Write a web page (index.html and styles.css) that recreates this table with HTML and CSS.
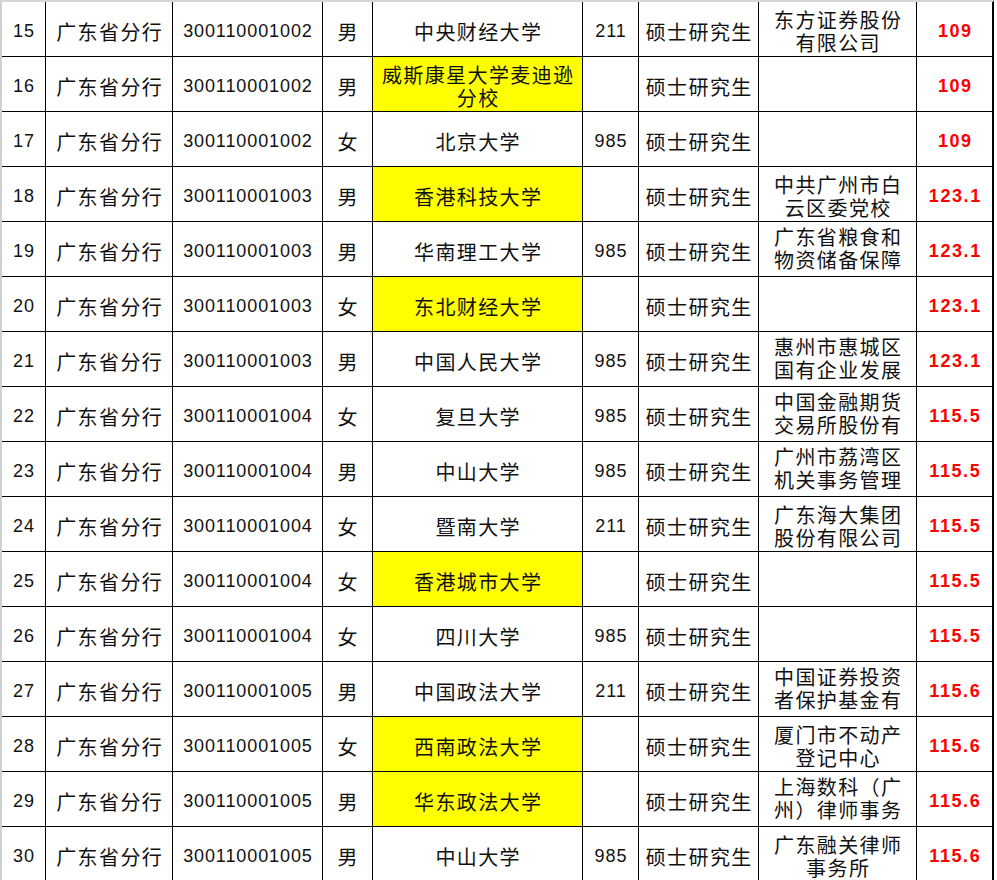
FILE: index.html
```html
<!DOCTYPE html>
<html lang="zh-CN">
<head>
<meta charset="utf-8">
<title>录用名单</title>
<link rel="stylesheet" href="styles.css">
</head>
<body>
<div class="sheet">
  <div class="row"><div class="c num">15</div><div class="c zh">广东省分行</div><div class="c num">300110001002</div><div class="c zh">男</div><div class="c zh">中央财经大学</div><div class="c num">211</div><div class="c zh">硕士研究生</div><div class="c zh"><div class="wrap">东方证券股份<br>有限公司</div></div><div class="c score">109</div></div>
  <div class="row"><div class="c num">16</div><div class="c zh">广东省分行</div><div class="c num">300110001002</div><div class="c zh">男</div><div class="c zh hl"><div class="wrap">威斯康星大学麦迪逊<br>分校</div></div><div class="c num"></div><div class="c zh">硕士研究生</div><div class="c zh"></div><div class="c score">109</div></div>
  <div class="row"><div class="c num">17</div><div class="c zh">广东省分行</div><div class="c num">300110001002</div><div class="c zh">女</div><div class="c zh">北京大学</div><div class="c num">985</div><div class="c zh">硕士研究生</div><div class="c zh"></div><div class="c score">109</div></div>
  <div class="row"><div class="c num">18</div><div class="c zh">广东省分行</div><div class="c num">300110001003</div><div class="c zh">男</div><div class="c zh hl">香港科技大学</div><div class="c num"></div><div class="c zh">硕士研究生</div><div class="c zh"><div class="wrap">中共广州市白<br>云区委党校</div></div><div class="c score">123.1</div></div>
  <div class="row"><div class="c num">19</div><div class="c zh">广东省分行</div><div class="c num">300110001003</div><div class="c zh">男</div><div class="c zh">华南理工大学</div><div class="c num">985</div><div class="c zh">硕士研究生</div><div class="c zh top"><div class="wrap clip">广东省粮食和<br>物资储备保障<br>中心</div></div><div class="c score">123.1</div></div>
  <div class="row"><div class="c num">20</div><div class="c zh">广东省分行</div><div class="c num">300110001003</div><div class="c zh">女</div><div class="c zh hl">东北财经大学</div><div class="c num"></div><div class="c zh">硕士研究生</div><div class="c zh"></div><div class="c score">123.1</div></div>
  <div class="row"><div class="c num">21</div><div class="c zh">广东省分行</div><div class="c num">300110001003</div><div class="c zh">男</div><div class="c zh">中国人民大学</div><div class="c num">985</div><div class="c zh">硕士研究生</div><div class="c zh top"><div class="wrap clip">惠州市惠城区<br>国有企业发展<br>服务中心</div></div><div class="c score">123.1</div></div>
  <div class="row"><div class="c num">22</div><div class="c zh">广东省分行</div><div class="c num">300110001004</div><div class="c zh">女</div><div class="c zh">复旦大学</div><div class="c num">985</div><div class="c zh">硕士研究生</div><div class="c zh top"><div class="wrap clip">中国金融期货<br>交易所股份有<br>限公司</div></div><div class="c score">115.5</div></div>
  <div class="row"><div class="c num">23</div><div class="c zh">广东省分行</div><div class="c num">300110001004</div><div class="c zh">男</div><div class="c zh">中山大学</div><div class="c num">985</div><div class="c zh">硕士研究生</div><div class="c zh top"><div class="wrap clip">广州市荔湾区<br>机关事务管理<br>局</div></div><div class="c score">115.5</div></div>
  <div class="row"><div class="c num">24</div><div class="c zh">广东省分行</div><div class="c num">300110001004</div><div class="c zh">女</div><div class="c zh">暨南大学</div><div class="c num">211</div><div class="c zh">硕士研究生</div><div class="c zh"><div class="wrap">广东海大集团<br>股份有限公司</div></div><div class="c score">115.5</div></div>
  <div class="row"><div class="c num">25</div><div class="c zh">广东省分行</div><div class="c num">300110001004</div><div class="c zh">女</div><div class="c zh hl">香港城市大学</div><div class="c num"></div><div class="c zh">硕士研究生</div><div class="c zh"></div><div class="c score">115.5</div></div>
  <div class="row"><div class="c num">26</div><div class="c zh">广东省分行</div><div class="c num">300110001004</div><div class="c zh">女</div><div class="c zh">四川大学</div><div class="c num">985</div><div class="c zh">硕士研究生</div><div class="c zh"></div><div class="c score">115.5</div></div>
  <div class="row"><div class="c num">27</div><div class="c zh">广东省分行</div><div class="c num">300110001005</div><div class="c zh">男</div><div class="c zh">中国政法大学</div><div class="c num">211</div><div class="c zh">硕士研究生</div><div class="c zh top"><div class="wrap clip">中国证券投资<br>者保护基金有<br>限责任公司</div></div><div class="c score">115.6</div></div>
  <div class="row"><div class="c num">28</div><div class="c zh">广东省分行</div><div class="c num">300110001005</div><div class="c zh">女</div><div class="c zh hl">西南政法大学</div><div class="c num"></div><div class="c zh">硕士研究生</div><div class="c zh"><div class="wrap">厦门市不动产<br>登记中心</div></div><div class="c score">115.6</div></div>
  <div class="row"><div class="c num">29</div><div class="c zh">广东省分行</div><div class="c num">300110001005</div><div class="c zh">男</div><div class="c zh hl">华东政法大学</div><div class="c num"></div><div class="c zh">硕士研究生</div><div class="c zh top"><div class="wrap clip">上海数科（广<br>州）律师事务<br>所</div></div><div class="c score">115.6</div></div>
  <div class="row"><div class="c num">30</div><div class="c zh">广东省分行</div><div class="c num">300110001005</div><div class="c zh">男</div><div class="c zh">中山大学</div><div class="c num">985</div><div class="c zh">硕士研究生</div><div class="c zh"><div class="wrap">广东融关律师<br>事务所</div></div><div class="c score">115.6</div></div>
</div>
</body>
</html>
```

FILE: styles.css
```css
html, body {
  margin: 0;
  padding: 0;
  background: #fff;
}

.sheet {
  display: grid;
  gap: 1px;
  width: 991px;
  background: #000;
  border-top: 2px solid #d6d6d6;
  border-left: 2px solid #d0d0d0;
  border-right: 1px solid #000;
}

.row {
  display: grid;
  grid-template-columns: 43px 126px 149px 49px 209px 55px 119px 157px 75px;
  grid-auto-rows: 54px;
  gap: 1px;
}

.c {
  background: #fff;
  display: flex;
  align-items: center;
  justify-content: center;
  text-align: center;
  padding-top: 5px;
  box-sizing: border-box;
  overflow: hidden;
  color: #111;
  white-space: nowrap;
}

.c.top {
  align-items: flex-start;
  padding-top: 4px;
}

.zh {
  font-family: "Noto Sans CJK SC", "Noto Sans", sans-serif;
  font-size: 20px;
  letter-spacing: 1.4px;
  padding-left: 1.4px;
  line-height: 22px;
}

.num {
  font-family: "Liberation Sans", Arial, sans-serif;
  font-size: 18px;
  letter-spacing: 0.9px;
  padding-left: 0.9px;
}

.score {
  font-family: "Liberation Sans", Arial, sans-serif;
  font-weight: bold;
  font-size: 18px;
  letter-spacing: 1.6px;
  padding-left: 1.6px;
  color: #f00;
}

.wrap {
  line-height: 22.5px;
}

.wrap.clip {
  height: 45px;
  overflow: hidden;
}

.hl {
  background: #ffff00;
}
```
